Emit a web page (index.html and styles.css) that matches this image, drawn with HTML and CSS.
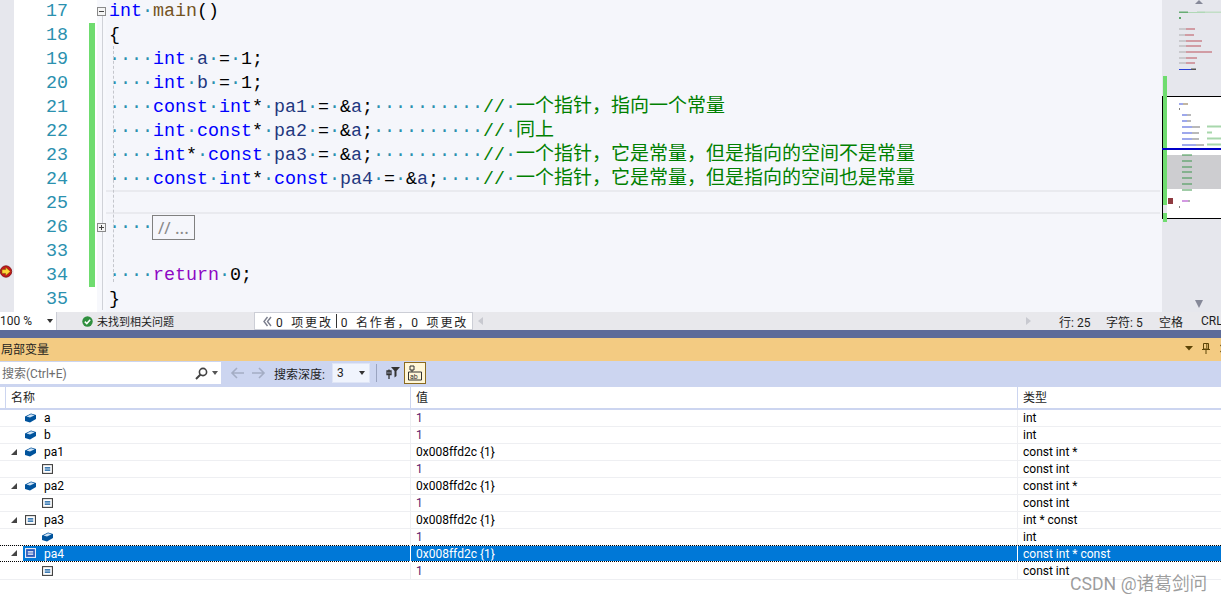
FILE: index.html
```html
<!DOCTYPE html>
<html lang="zh-CN">
<head>
  <meta charset="UTF-8">
  <title>局部变量</title>
  <link rel="stylesheet" href="styles.css">
</head>
<body>

<svg class="defs" width="0" height="0">
  <symbol id="cube" viewBox="0 0 11 10">
    <path d="M0 3.5 6 0.5 11 2 11 6 5 9.5 0 8Z" fill="#00539c"/>
    <path d="M1.5 3.4 6 1.3 9.6 2.3 5 4.6Z" fill="#cfe3f5"/>
  </symbol>
  <symbol id="field" viewBox="0 0 10 9">
    <rect x="0.5" y="0.5" width="9" height="8" fill="#fff" stroke="#424242"/>
    <path d="M2.5 3.5H7.5M2.5 5.5H7.5" stroke="#00539c"/>
  </symbol>
  <symbol id="fieldsel" viewBox="0 0 10 9">
    <rect x="0.5" y="0.5" width="9" height="8" fill="#2a58b8" stroke="#e8eefa"/>
    <path d="M2.5 3.5H7.5M2.5 5.5H7.5" stroke="#fff"/>
  </symbol>
</svg>

<div class="editor">
  <div class="glyphs">
    <svg class="bp" width="13" height="13" viewBox="0 0 13 13">
      <circle cx="6" cy="6.5" r="5.7" fill="#c8171b" stroke="#7a1010" stroke-width="0.8"/>
      <path d="M2 4.6H5.6V2.2L10.4 6.5 5.6 10.8V8.4H2Z" fill="#ffd83a" stroke="#6b5300" stroke-width="0.5"/>
    </svg>
  </div>
  <div class="numbers">
    <div>17</div><div>18</div><div>19</div><div>20</div><div>21</div><div>22</div>
    <div>23</div><div>24</div><div>25</div><div>26</div><div>33</div><div>34</div><div>35</div>
  </div>
  <div class="changes"><div class="change-bar"></div></div>
  <div class="folds">
    <span class="fold fold-a"><svg width="9" height="9"><rect x="0.5" y="0.5" width="8" height="8" fill="#f5f5f5" stroke="#8a8a8a"/><path d="M2 4.5H7" stroke="#444"/></svg></span>
    <span class="fold fold-b"><svg width="9" height="9"><rect x="0.5" y="0.5" width="8" height="8" fill="#f5f5f5" stroke="#8a8a8a"/><path d="M2 4.5H7M4.5 2V7" stroke="#444"/></svg></span>
  </div>
  <div class="code">
    <div class="guide"></div>
    <div class="line"><span class="k">int</span><i>·</i><span class="f">main</span>()</div>
    <div class="line">{</div>
    <div class="line"><i>····</i><span class="k">int</span><i>·</i><span class="v">a</span><i>·</i>=<i>·</i>1;</div>
    <div class="line"><i>····</i><span class="k">int</span><i>·</i><span class="v">b</span><i>·</i>=<i>·</i>1;</div>
    <div class="line"><i>····</i><span class="k">const</span><i>·</i><span class="k">int</span>*<i>·</i><span class="v">pa1</span><i>·</i>=<i>·</i>&amp;<span class="v">a</span>;<i>··········</i><span class="c">//<i>·</i><span class="cn">一个指针，指向一个常量</span></span></div>
    <div class="line"><i>····</i><span class="k">int</span><i>·</i><span class="k">const</span>*<i>·</i><span class="v">pa2</span><i>·</i>=<i>·</i>&amp;<span class="v">a</span>;<i>··········</i><span class="c">//<i>·</i><span class="cn">同上</span></span></div>
    <div class="line"><i>····</i><span class="k">int</span>*<i>·</i><span class="k">const</span><i>·</i><span class="v">pa3</span><i>·</i>=<i>·</i>&amp;<span class="v">a</span>;<i>··········</i><span class="c">//<i>·</i><span class="cn">一个指针，它是常量，但是指向的空间不是常量</span></span></div>
    <div class="line"><i>····</i><span class="k">const</span><i>·</i><span class="k">int</span>*<i>·</i><span class="k">const</span><i>·</i><span class="v">pa4</span><i>·</i>=<i>·</i>&amp;<span class="v">a</span>;<i>····</i><span class="c">//<i>·</i><span class="cn">一个指针，它是常量，但是指向的空间也是常量</span></span></div>
    <div class="line current"></div>
    <div class="line"><i>····</i><span class="collapsed">// ...</span></div>
    <div class="line"></div>
    <div class="line"><i>····</i><span class="r">return</span><i>·</i>0;</div>
    <div class="line">}</div>
  </div>
  <svg class="minimap" width="59" height="312" viewBox="1162 0 59 312">
    <rect x="1162" y="0" width="59" height="312" fill="#e6e7ed"/>
    <path d="M1195 4 1199 0 1203 4Z" fill="#868999"/>
    <path d="M1195 300H1203L1199 308Z" fill="#868999"/>
    <g opacity="0.75">
      <rect x="1179" y="11.5" width="9" height="1.5" fill="#3f9a4c"/>
      <rect x="1188" y="12" width="9" height="1" fill="#9fd3a4"/>
      <rect x="1197" y="11.5" width="8" height="1.5" fill="#9fd3a4"/>
      <rect x="1205" y="11.5" width="16" height="1.5" fill="#b6dcb9"/>
      <rect x="1179" y="17" width="2" height="2" fill="#2f8f3e"/>
      <g fill="#999">
        <rect x="1179" y="28.5" width="7" height="1"/>
        <rect x="1179" y="34.5" width="6" height="1"/>
        <rect x="1179" y="40.5" width="7" height="1"/>
        <rect x="1179" y="45.5" width="7" height="1"/>
        <rect x="1179" y="51.5" width="7" height="1"/>
        <rect x="1179" y="57.5" width="7" height="1"/>
        <rect x="1179" y="62.5" width="7" height="1"/>
      </g>
      <g fill="#b0222c">
        <rect x="1186" y="28.5" width="9" height="1"/>
        <rect x="1185" y="34.5" width="9" height="1"/>
        <rect x="1186" y="40.5" width="16" height="1"/>
        <rect x="1186" y="45.5" width="15" height="1"/>
        <rect x="1186" y="51.5" width="26" height="1"/>
        <rect x="1186" y="57.5" width="11" height="1"/>
        <rect x="1186" y="62.5" width="9" height="1"/>
      </g>
    </g>
    <rect x="1179" y="69" width="12" height="1" fill="#2a40d8"/>
    <rect x="1191" y="68.5" width="5" height="1.5" fill="#555"/>
    <rect x="1167" y="97" width="54" height="121" fill="#fff"/>
    <rect x="1162" y="96" width="1" height="123" fill="#000"/>
    <rect x="1163" y="96" width="58" height="1" fill="#000"/>
    <rect x="1163" y="218" width="58" height="1" fill="#000"/>
    <rect x="1163" y="76" width="4" height="129" fill="#6fdc6f"/>
    <rect x="1163" y="213" width="4" height="9" fill="#6fdc6f"/>
    <rect x="1167" y="155" width="54" height="34" fill="#cdcdd0"/>
    <rect x="1162" y="148" width="59" height="2" fill="#0000c8"/>
    <g opacity="0.9">
      <rect x="1179" y="103.5" width="4" height="1" fill="#2a40d8"/>
      <rect x="1183" y="103.5" width="5" height="1" fill="#7a6030"/>
      <rect x="1179" y="108" width="1" height="2" fill="#777"/>
      <g fill="#2a40d8">
        <rect x="1182" y="114.5" width="5" height="1"/>
        <rect x="1182" y="120.5" width="5" height="1"/>
        <rect x="1182" y="126.5" width="10" height="1"/>
        <rect x="1182" y="132.5" width="10" height="1"/>
        <rect x="1182" y="138.5" width="10" height="1"/>
        <rect x="1182" y="144.5" width="14" height="1"/>
      </g>
      <g fill="#666">
        <rect x="1187" y="114.5" width="4" height="1"/>
        <rect x="1187" y="120.5" width="4" height="1"/>
        <rect x="1192" y="126.5" width="8" height="1"/>
        <rect x="1192" y="132.5" width="7" height="1"/>
        <rect x="1192" y="138.5" width="7" height="1"/>
        <rect x="1196" y="144.5" width="8" height="1"/>
      </g>
      <g fill="#9fd3a4">
        <rect x="1207" y="125.5" width="14" height="2"/>
        <rect x="1207" y="131.5" width="5" height="2"/>
        <rect x="1207" y="137.5" width="14" height="2"/>
        <rect x="1207" y="143.5" width="14" height="2"/>
      </g>
      <g fill="#2f8f3e">
        <rect x="1182" y="154.5" width="10" height="1"/>
        <rect x="1182" y="160.5" width="10" height="1"/>
        <rect x="1182" y="166.5" width="10" height="1"/>
        <rect x="1182" y="171.5" width="10" height="1"/>
        <rect x="1182" y="177.5" width="10" height="1"/>
        <rect x="1182" y="183.5" width="10" height="1"/>
        <rect x="1182" y="189.5" width="10" height="1"/>
      </g>
      <rect x="1182" y="200.5" width="6" height="1" fill="#a020c0"/>
      <rect x="1188" y="200.5" width="2" height="1" fill="#555"/>
      <rect x="1179" y="206" width="1" height="2" fill="#777"/>
    </g>
    <rect x="1168" y="198" width="5" height="6" fill="#8f3a40"/>
  </svg>
</div>

<div class="statusbar">
  <div class="zoom">100 %<span class="caret"></span></div>
  <div class="issues">
    <svg width="11" height="11" viewBox="0 0 11 11"><circle cx="5.5" cy="5.5" r="5.2" fill="#2f8f3e"/><path d="M2.8 5.6 4.8 7.6 8.2 3.8" fill="none" stroke="#fff" stroke-width="1.5"/></svg>
    未找到相关问题
  </div>
  <div class="codelens">
    <svg width="9" height="11" viewBox="0 0 9 11"><path d="M4.5 1 1 5.5 4.5 10M8 1 4.5 5.5 8 10" fill="none" stroke="#7a7d8c" stroke-width="1.4"/></svg>
    <span>0 项更改</span><b></b><span>0 名作者，0 项更改</span>
  </div>
  <span class="arrow-left"></span>
  <div class="spacer"></div>
  <span class="arrow-right"></span>
  <span class="pos pos-line">行: 25</span>
  <span class="pos pos-char">字符: 5</span>
  <span class="pos pos-space">空格</span>
  <span class="pos pos-eol">CRLF</span>
</div>

<div class="band"></div>

<div class="titlebar">
  <span>局部变量</span>
  <div class="spacer"></div>
  <svg class="title-icon" width="8" height="5"><path d="M0 0H8L4 4.5Z" fill="#5c4406"/></svg>
  <svg class="title-icon pin" width="8" height="11" viewBox="0 0 8 11"><path d="M1.5 0.5H6.5V6H1.5ZM0 6.5H8M4 6.5V11M4.8 1V5.5" fill="none" stroke="#5c4406"/></svg>
  <svg class="title-icon close" width="8" height="9" viewBox="0 0 8 9"><path d="M0.5 1 7.5 8M7.5 1 0.5 8" stroke="#5c4406" stroke-width="1.3"/></svg>
</div>

<div class="toolbar">
  <div class="search">
    <span class="search-text">搜索(Ctrl+E)</span>
    <svg width="13" height="13" viewBox="0 0 13 13"><circle cx="8" cy="5" r="3.6" fill="none" stroke="#424242" stroke-width="1.6"/><path d="M5.5 7.5 1 12" stroke="#424242" stroke-width="2"/></svg>
    <span class="caret small"></span>
  </div>
  <svg class="nav" width="15" height="12" viewBox="0 0 15 12"><path d="M14 6H2M7 1 2 6 7 11" fill="none" stroke="#a4adc4" stroke-width="1.6"/></svg>
  <svg class="nav" width="15" height="12" viewBox="0 0 15 12"><path d="M1 6H13M8 1 13 6 8 11" fill="none" stroke="#a4adc4" stroke-width="1.6"/></svg>
  <span class="depth-label">搜索深度:</span>
  <div class="depth">3<span class="caret"></span></div>
  <span class="tool-sep"></span>
  <svg class="filter" width="14" height="14" viewBox="0 0 14 14"><path d="M5 1H14L10.5 5V10L8.5 11.5V5Z" fill="#333"/><path d="M3 3.5V13M1 5H5V8.5H1Z" fill="none" stroke="#333" stroke-width="1.3"/></svg>
  <div class="tool-on">
    <svg width="16" height="16" viewBox="0 0 16 16"><path d="M3 1H7V5H3ZM5 5V7H1.5V15H14.5V7H5" fill="none" stroke="#333"/><text x="3" y="13.5" class="ab">ab</text></svg>
  </div>
</div>

<div class="grid">
  <div class="grid-head"><span>名称</span><span>值</span><span>类型</span></div>

  <div class="row"><span class="name"><svg class="ico"><use href="#cube"/></svg>a</span><span class="val num">1</span><span>int</span></div>
  <div class="row"><span class="name"><svg class="ico"><use href="#cube"/></svg>b</span><span class="val num">1</span><span>int</span></div>
  <div class="row"><span class="name"><em class="tw"></em><svg class="ico"><use href="#cube"/></svg>pa1</span><span class="val">0x008ffd2c {1}</span><span>const int *</span></div>
  <div class="row"><span class="name child"><svg class="ico"><use href="#field"/></svg></span><span class="val num">1</span><span>const int</span></div>
  <div class="row"><span class="name"><em class="tw"></em><svg class="ico"><use href="#cube"/></svg>pa2</span><span class="val">0x008ffd2c {1}</span><span>const int *</span></div>
  <div class="row"><span class="name child"><svg class="ico"><use href="#field"/></svg></span><span class="val num">1</span><span>const int</span></div>
  <div class="row"><span class="name"><em class="tw"></em><svg class="ico"><use href="#field"/></svg>pa3</span><span class="val">0x008ffd2c {1}</span><span>int * const</span></div>
  <div class="row"><span class="name child"><svg class="ico"><use href="#cube"/></svg></span><span class="val num">1</span><span>int</span></div>
  <div class="row selected"><span class="name"><em class="tw"></em><span class="sel-fill"><svg class="ico"><use href="#fieldsel"/></svg>pa4</span></span><span class="val">0x008ffd2c {1}</span><span>const int * const</span></div>
  <div class="row"><span class="name child"><svg class="ico"><use href="#field"/></svg></span><span class="val num">1</span><span>const int</span></div>
</div>

<div class="watermark">CSDN @诸葛剑问</div>

</body>
</html>
```

FILE: styles.css
```css
* {
  box-sizing: border-box;
}

html, body {
  margin: 0;
  height: 100%;
}

body {
  width: 1221px;
  height: 602px;
  overflow: hidden;
  background: white;
  color: #1e1e1e;
  font-family: Roboto, "Noto Sans CJK SC", sans-serif;
  font-size: 12px;
  position: relative;
}

.defs {
  display: block;
  height: 0;
}

.spacer {
  flex: 1;
}

/* editor */
.editor {
  display: flex;
  height: 312px;
  overflow: hidden;
  background: white;
}

.glyphs {
  width: 14px;
  background: #e6e7ed;
  padding-top: 265px;
}

.bp {
  display: block;
}

.numbers {
  width: 75px;
  padding-right: 21px;
  text-align: right;
  font-family: "Liberation Mono", monospace;
  font-size: 18.33px;
  line-height: 24px;
  color: #2b91af;
}

.changes {
  width: 8px;
  padding-top: 23px;
}

.change-bar {
  width: 6px;
  height: 264px;
  background: #6fdc6f;
}

.folds {
  width: 9px;
  position: relative;
  background: #f7f8fc;
}

.folds::after {
  content: "";
  position: absolute;
  left: 5px;
  top: 15px;
  bottom: 2px;
  width: 1px;
  background: #d0d2d8;
}

.fold {
  position: absolute;
  left: 0;
  z-index: 1;
  height: 9px;
}

.fold svg {
  display: block;
}

.fold-a {
  top: 7px;
}

.fold-b {
  top: 223px;
}

.code {
  flex: 1;
  position: relative;
  background: #f5f6fb;
  margin-top: -2px;
  padding-left: 3px;
  font-family: "Liberation Mono", "Noto Sans CJK SC", monospace;
  font-size: 18.33px;
  color: #000;
}

.line {
  height: 24px;
  line-height: 28px;
  white-space: pre;
}

.line i {
  font-style: normal;
  color: #2b91af;
}

.line.current {
  margin-left: -3px;
  margin-right: 2px;
  border-top: 2px solid #e9eaef;
  border-bottom: 2px solid #e9eaef;
}

.guide {
  position: absolute;
  left: 7px;
  top: 48px;
  bottom: 30px;
  border-left: 1px dashed #c4c6cc;
}

.k { color: #0000ff; }
.f { color: #74531f; }
.v { color: #1f377f; }
.r { color: #8f08c4; }
.c { color: #008000; }

.cn {
  font-family: "Noto Sans CJK SC", sans-serif;
  font-size: 19px;
  line-height: 0;
}

.collapsed {
  display: inline-block;
  width: 43px;
  height: 25px;
  margin: 1px 0 0 -1px;
  line-height: 23px;
  border: 1px solid #808080;
  padding-left: 5px;
  color: #8a8a8a;
  vertical-align: top;
  font-family: "Noto Sans", sans-serif;
  font-size: 17px;
}

.minimap {
  flex: none;
  display: block;
}

/* status bar */
.statusbar {
  display: flex;
  align-items: center;
  height: 18px;
  background: #e8e8ec;
  color: #1e1e1e;
  white-space: nowrap;
  font-size: 12px;
}

.caret {
  width: 0;
  height: 0;
  border-left: 3.5px solid transparent;
  border-right: 3.5px solid transparent;
  border-top: 4px solid #333;
}

.zoom {
  width: 57px;
  height: 18px;
  display: flex;
  align-items: center;
  justify-content: space-between;
  background: white;
  border-right: 1px solid #ccced6;
  padding-right: 3px;
}

.issues {
  width: 197px;
  padding-left: 25px;
  display: flex;
  align-items: center;
  gap: 4px;
  font-size: 11px;
}

.codelens {
  width: 219px;
  height: 18px;
  display: flex;
  align-items: center;
  background: white;
  border: 1px solid #ccced6;
  padding-left: 8px;
  letter-spacing: 1.8px;
  word-spacing: 2px;
}

.codelens svg {
  margin-right: 4px;
}

.codelens b {
  width: 1px;
  height: 14px;
  background: #333;
  margin: 0 4px 0 3px;
}

.arrow-left, .arrow-right {
  width: 0;
  height: 0;
  border-top: 4px solid transparent;
  border-bottom: 4px solid transparent;
}

.arrow-left {
  margin-left: 5px;
  border-right: 5px solid #c8c9d0;
}

.arrow-right {
  border-left: 5px solid #c8c9d0;
}

.pos-line {
  margin-left: 28px;
  width: 47px;
}

.pos-char {
  width: 53px;
}

.pos-space {
  width: 42px;
}

.pos-eol {
  width: 20px;
  overflow: hidden;
}

/* locals window */
.band {
  height: 8px;
  background: #5d6b99;
}

.titlebar {
  display: flex;
  align-items: center;
  height: 23px;
  padding: 0 0 2px 1px;
  background: #f3cb82;
  color: #1e1e1e;
  font-size: 12px;
  overflow: hidden;
}

.title-icon {
  flex: none;
}

.pin {
  margin-left: 9px;
}

.close {
  margin-left: 10px;
  margin-right: -7px;
}

.toolbar {
  display: flex;
  align-items: center;
  height: 26px;
  padding-bottom: 2px;
  background: #ccd5f0;
  font-size: 12px;
}

.search {
  width: 221px;
  height: 22px;
  display: flex;
  align-items: center;
  background: white;
  padding: 0 3px 0 2px;
}

.search-text {
  flex: 1;
  padding-bottom: 2px;
  color: #6d6d6d;
}

.caret.small {
  margin-left: 4px;
  border-top-color: #555;
}

.nav {
  margin-left: 9px;
}

.nav + .nav {
  margin-left: 6px;
}

.depth-label {
  margin-left: 8px;
  width: 58px;
}

.depth {
  width: 38px;
  height: 20px;
  display: flex;
  align-items: center;
  justify-content: space-between;
  padding: 0 4px 0 4px;
  background: #f0f4fd;
  border: 1px solid #dfe5f6;
}

.tool-sep {
  width: 1px;
  height: 18px;
  margin: 0 9px 0 6px;
  background: #9aa4c0;
}

.filter {
  flex: none;
}

.tool-on {
  width: 22px;
  height: 22px;
  margin-left: 4px;
  display: flex;
  align-items: center;
  justify-content: center;
  background: #fff7d8;
  border: 1px solid #8a6a1f;
}

.ab {
  font-size: 7px;
  fill: #333;
}

/* grid */
.grid-head, .row {
  display: grid;
  grid-template-columns: 404px 607px 1fr;
  white-space: nowrap;
}

.grid-head {
  grid-template-columns: 410px 607px 1fr;
  height: 23px;
  align-items: center;
  border-bottom: 2px solid #ccd5f0;
  color: #1e1e1e;
}

.grid-head span {
  height: 21px;
  line-height: 23px;
  padding-left: 5px;
  border-left: 1px solid #ccd5f0;
}

.grid-head span:first-child {
  margin-left: 5px;
}

.row {
  height: 17px;
  line-height: 17px;
  padding-left: 6px;
  color: #000;
  border-bottom: 1px solid #eeeff2;
}

.row > span {
  padding-left: 5px;
  border-left: 1px solid #eeeff2;
}

.row > .name {
  display: flex;
  align-items: center;
  border-left: 0;
  padding-left: 38px;
  position: relative;
}

.name .ico {
  position: absolute;
  left: 19px;
  top: 3px;
  width: 11px;
  height: 10px;
}

.name.child .ico {
  left: 36px;
}

.num {
  color: #5c1a6e;
}

.tw {
  position: absolute;
  left: 5px;
  top: 5px;
  width: 0;
  height: 0;
  border-left: 6px solid transparent;
  border-bottom: 6px solid #444;
}

.selected {
  background: linear-gradient(#0078d7, #0078d7) 23px 0 no-repeat;
  color: white;
  padding-left: 0;
  border-top: 1px dotted #000;
  border-bottom: 1px dotted #000;
  margin: -1px 0 1px;
  line-height: 16px;
  grid-template-columns: 410px 607px 1fr;
}

.selected > span {
  border-left: 1px solid white;
}

.selected > .name {
  border-left: 0;
  padding-left: 23px;
}

.selected .tw {
  left: 11px;
  top: 4px;
}

.sel-fill {
  padding-left: 21px;
}

.selected .ico {
  left: 25px;
  top: 2px;
}

.watermark {
  position: absolute;
  left: 1070px;
  top: 572px;
  font-size: 17.7px;
  line-height: 24px;
  color: rgba(90, 90, 90, 0.6);
  white-space: nowrap;
}
```
